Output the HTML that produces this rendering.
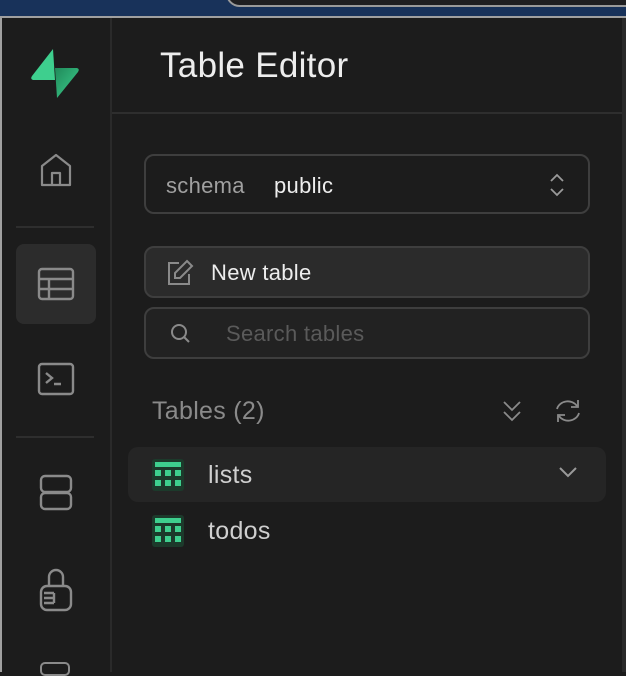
<!DOCTYPE html><html><head><style>
*{margin:0;padding:0;box-sizing:border-box}
body{width:626px;height:672px;background:#1c1c1c;font-family:"Liberation Sans",sans-serif;position:relative;overflow:hidden}
.a{position:absolute}
.box{position:absolute;border:2px solid #3e3e3e;border-radius:10px}
.t{position:absolute;white-space:nowrap;letter-spacing:0.3px}
</style></head><body>
<div class="a" style="left:0;top:0;width:626px;height:16px;background:#18325a"></div>
<div class="a" style="left:226px;top:-20px;width:420px;height:27px;background:#1f1f21;border:2px solid #9a9a9a;border-radius:18px"></div>
<div class="a" style="left:0;top:16px;width:626px;height:2px;background:#a0a0a0"></div>
<div class="a" style="left:0;top:18px;width:2px;height:654px;background:#a0a0a0"></div>
<div class="a" style="left:110px;top:18px;width:2px;height:654px;background:#2a2a2a"></div>
<div class="a" style="left:112px;top:112px;width:510px;height:2px;background:#2e2e2e"></div>
<div class="a" style="left:622px;top:18px;width:4px;height:654px;background:#2a2a2a"></div>
<div class="a" style="left:16px;top:226px;width:78px;height:2px;background:#2e2e2e"></div>
<div class="a" style="left:16px;top:436px;width:78px;height:2px;background:#2e2e2e"></div>
<div class="a" style="left:16px;top:244px;width:80px;height:80px;background:#2c2c2c;border-radius:8px"></div>
<svg class="a" style="left:0;top:0" width="110" height="110" viewBox="0 0 110 110"><defs><linearGradient id="g" x1="0" y1="0" x2="1" y2="1"><stop offset="0" stop-color="#1f8a5a"/><stop offset="1" stop-color="#3ecf8e"/></linearGradient></defs><path d="M53 49 L55 80 L33 80 Q30 79 32 76Z" fill="#3ecf8e"/><path d="M57 98 L55 68 L77 68 Q80 69 78 72Z" fill="url(#g)"/></svg>
<svg class="a" style="left:38px;top:152px" width="36" height="36" viewBox="0 0 36 36" fill="none" stroke="#8a8a8a" stroke-width="2.2" stroke-linejoin="round"><path d="M4 14 L18 3 L32 14 V33 H4Z"/><path d="M14 33 V21 H22 V33"/></svg>
<svg class="a" style="left:37px;top:267px" width="38" height="34" viewBox="0 0 38 34" fill="none" stroke="#8a8a8a" stroke-width="2.4"><rect x="2" y="2" width="34" height="30" rx="3"/><path d="M2 12H36M2 22H36M12 12V32"/></svg>
<svg class="a" style="left:37px;top:362px" width="38" height="34" viewBox="0 0 38 34" fill="none" stroke="#8a8a8a" stroke-width="2.4"><rect x="2" y="2" width="34" height="30" rx="3"/><path d="M9 11L15 16L9 21M17 22H24"/></svg>
<svg class="a" style="left:39px;top:474px" width="34" height="40" viewBox="0 0 34 40" fill="none" stroke="#8a8a8a" stroke-width="2.4"><rect x="2" y="2" width="30" height="16" rx="4"/><rect x="2" y="19" width="30" height="16" rx="4"/></svg>
<svg class="a" style="left:38px;top:568px" width="36" height="46" viewBox="0 0 36 46" fill="none" stroke="#8a8a8a" stroke-width="2.4"><path d="M11 18V9a7 7 0 0 1 14 0V18"/><rect x="3" y="18" width="30" height="24" rx="6"/><path d="M6 25H16M6 30H16M6 35H16M16 25V35"/></svg>
<div class="a" style="left:40px;top:662px;width:30px;height:14px;border:2.4px solid #8a8a8a;border-radius:5px"></div>
<div class="t" style="left:160px;top:46px;font-size:35px;color:#ededed">Table Editor</div>
<div class="box" style="left:144px;top:154px;width:446px;height:60px"></div>
<div class="t" style="left:166px;top:173px;font-size:22px;color:#a0a0a0">schema</div>
<div class="t" style="left:274px;top:173px;font-size:22px;color:#ededed">public</div>
<svg class="a" style="left:549px;top:173px" width="16" height="24" viewBox="0 0 16 24" fill="none" stroke="#9a9a9a" stroke-width="1.8"><path d="M2 8L8 2L14 8M2 16L8 22L14 16"/></svg>
<div class="box" style="left:144px;top:246px;width:446px;height:52px;background:#2b2b2b"></div>
<svg class="a" style="left:166px;top:259px" width="28" height="28" viewBox="0 0 28 28" fill="none" stroke="#8a8a8a" stroke-width="2"><path d="M13 4H3V25H23V15"/><path d="M21 2L26 7L14 19H9V14Z"/></svg>
<div class="t" style="left:211px;top:260px;font-size:22px;color:#ededed">New table</div>
<div class="box" style="left:144px;top:307px;width:446px;height:52px;background:#222"></div>
<svg class="a" style="left:169px;top:322px" width="24" height="24" viewBox="0 0 24 24" fill="none" stroke="#8a8a8a" stroke-width="2"><circle cx="10" cy="10" r="7"/><path d="M15 15L20 20"/></svg>
<div class="t" style="left:226px;top:321px;font-size:22px;color:#5a5a5a">Search tables</div>
<div class="t" style="left:152px;top:397px;font-size:25px;color:#8a8a8a">Tables (2)</div>
<svg class="a" style="left:502px;top:400px" width="20" height="24" viewBox="0 0 20 24" fill="none" stroke="#8a8a8a" stroke-width="1.8"><path d="M2 2L10 10L18 2M2 12L10 20L18 12"/></svg>
<svg class="a" style="left:553px;top:398px" width="30" height="26" viewBox="0 0 30 26" fill="none" stroke="#8a8a8a" stroke-width="1.8"><path d="M4 11A11 10 0 0 1 24 8M26 15A11 10 0 0 1 6 18"/><path d="M25 2V9H18M5 24V17H12"/></svg>
<div class="a" style="left:128px;top:447px;width:478px;height:55px;background:#252525;border-radius:10px"></div>
<svg class="a" style="left:152px;top:459px" width="32" height="32" viewBox="0 0 32 32"><rect width="32" height="32" rx="3" fill="#1c3a2b"/><rect x="3" y="3" width="26" height="5" fill="#3ecf8e"/><g fill="#3ecf8e"><rect x="3" y="11" width="6" height="6"/><rect x="13" y="11" width="6" height="6"/><rect x="23" y="11" width="6" height="6"/><rect x="3" y="21" width="6" height="6"/><rect x="13" y="21" width="6" height="6"/><rect x="23" y="21" width="6" height="6"/></g></svg>
<div class="t" style="left:208px;top:461px;font-size:25px;color:#cfcfcf">lists</div>
<svg class="a" style="left:558px;top:465px" width="20" height="14" viewBox="0 0 20 14" fill="none" stroke="#9a9a9a" stroke-width="2"><path d="M2 3L10 11L18 3"/></svg>
<svg class="a" style="left:152px;top:515px" width="32" height="32" viewBox="0 0 32 32"><rect width="32" height="32" rx="3" fill="#1c3a2b"/><rect x="3" y="3" width="26" height="5" fill="#3ecf8e"/><g fill="#3ecf8e"><rect x="3" y="11" width="6" height="6"/><rect x="13" y="11" width="6" height="6"/><rect x="23" y="11" width="6" height="6"/><rect x="3" y="21" width="6" height="6"/><rect x="13" y="21" width="6" height="6"/><rect x="23" y="21" width="6" height="6"/></g></svg>
<div class="t" style="left:208px;top:517px;font-size:25px;color:#cfcfcf">todos</div>
</body></html>
